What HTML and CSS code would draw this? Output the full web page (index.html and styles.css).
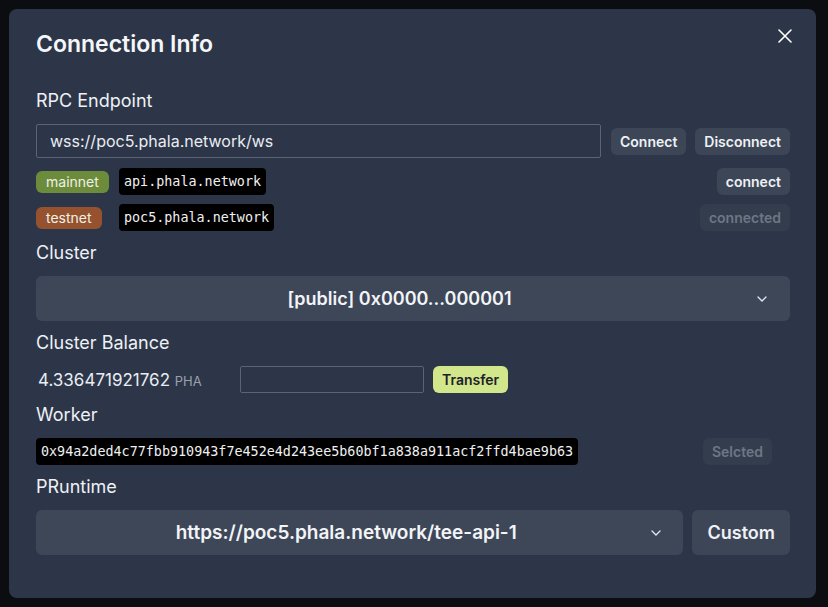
FILE: index.html
```html
<!DOCTYPE html>
<html lang="en">
<head>
  <meta charset="UTF-8">
  <title>Connection Info</title>
  <link rel="stylesheet" href="styles.css">
</head>
<body>
  <div class="backdrop">
    <div class="modal">
      <button class="close-btn" aria-label="Close">
        <svg width="14" height="14" viewBox="0 0 14 14"><path d="M1 1L13 13M13 1L1 13" stroke="#fff" stroke-width="1.6" stroke-linecap="round"/></svg>
      </button>
      <h1 class="modal-title">Connection Info</h1>

      <div class="section">
        <label class="field-label">RPC Endpoint</label>
        <div class="row">
          <input class="text-input endpoint-input" type="text" value="wss://poc5.phala.network/ws">
          <button class="btn">Connect</button>
          <button class="btn">Disconnect</button>
        </div>
        <div class="preset-row">
          <span class="badge-cell"><span class="badge badge-main">mainnet</span></span>
          <code class="code">api.phala.network</code>
          <button class="btn push-right">connect</button>
        </div>
        <div class="preset-row">
          <span class="badge-cell"><span class="badge badge-test">testnet</span></span>
          <code class="code">poc5.phala.network</code>
          <button class="btn push-right" disabled>connected</button>
        </div>
      </div>

      <div class="section">
        <label class="field-label">Cluster</label>
        <div class="select">
          <span>[public] 0x0000...000001</span>
          <svg class="chevron" width="10" height="6" viewBox="0 0 10 6"><path d="M1 1L5 5L9 1" stroke="#e2e8f0" stroke-width="1.3" fill="none" stroke-linecap="round"/></svg>
        </div>
      </div>

      <div class="section">
        <label class="field-label">Cluster Balance</label>
        <div class="balance-row">
          <span class="balance">4.336471921762 <small>PHA</small></span>
          <input class="text-input amount-input" type="text">
          <button class="btn btn-lime">Transfer</button>
        </div>
      </div>

      <div class="section">
        <label class="field-label">Worker</label>
        <div class="worker-row">
          <code class="code code-worker">0x94a2ded4c77fbb910943f7e452e4d243ee5b60bf1a838a911acf2ffd4bae9b63</code>
          <button class="btn" disabled>Selcted</button>
        </div>
      </div>

      <div class="section">
        <label class="field-label">PRuntime</label>
        <div class="row">
          <div class="select select-runtime">
            <span>https://poc5.phala.network/tee-api-1</span>
            <svg class="chevron" width="10" height="6" viewBox="0 0 10 6"><path d="M1 1L5 5L9 1" stroke="#e2e8f0" stroke-width="1.3" fill="none" stroke-linecap="round"/></svg>
          </div>
          <button class="btn btn-large">Custom</button>
        </div>
      </div>
    </div>
  </div>
</body>
</html>
```

FILE: styles.css
```css
body {
  margin: 0;
  background-color: #0c0d10;
  font-family: Inter, "Noto Sans", sans-serif;
  color: #e9edf3;
}

.backdrop {
  width: 828px;
  height: 607px;
  padding: 9px 0 0 9px;
  box-sizing: border-box;
}

.modal {
  position: relative;
  width: 807px;
  height: 589px;
  box-sizing: border-box;
  padding: 19px 26px 0 27px;
  background-color: #2d3648;
  border-radius: 8px;
}

.close-btn {
  position: absolute;
  top: 15px;
  right: 19px;
  width: 24px;
  height: 24px;
  padding: 0;
  border: none;
  background: none;
  display: flex;
  align-items: center;
  justify-content: center;
}

.modal-title {
  margin: 0 0 29px;
  font-size: 23px;
  font-weight: 600;
  line-height: 32px;
  color: #f4f6f9;
}

.section {
  margin-bottom: 10px;
}

.field-label {
  display: block;
  font-size: 18px;
  line-height: 24px;
  margin-bottom: 11px;
  color: #eef1f5;
}

.row {
  display: flex;
  align-items: center;
  gap: 9px;
}

.text-input {
  box-sizing: border-box;
  background: transparent;
  border: 1px solid #5b6475;
  border-radius: 2px;
  color: #e9edf3;
  font-family: inherit;
  outline: none;
}

.endpoint-input {
  width: 565px;
  height: 34px;
  padding: 0 13px;
  font-size: 16px;
  margin-right: 1px;
}

.btn {
  height: 27px;
  padding: 0 9px;
  border: none;
  border-radius: 6px;
  background-color: #3d4657;
  color: #eef1f5;
  font-family: inherit;
  font-size: 14px;
  font-weight: 600;
}

.btn:disabled {
  color: #6e7685;
  background-color: #343d4e;
}

.push-right {
  margin-left: auto;
}

.preset-row {
  display: flex;
  align-items: center;
  margin-top: 10px;
}

.preset-row + .preset-row {
  margin-top: 9px;
}

.badge-cell {
  width: 83px;
}

.badge {
  display: inline-block;
  height: 22px;
  line-height: 22px;
  padding: 0 10px;
  border-radius: 6px;
  font-size: 14px;
  color: #eef1e6;
}

.badge-main {
  background-color: #6c8b3b;
}

.badge-test {
  background-color: #96522f;
}

.code {
  display: inline-block;
  height: 27px;
  line-height: 27px;
  padding: 0 5px;
  background-color: #000;
  border-radius: 4px;
  font-family: "DejaVu Sans Mono", monospace;
  font-size: 13.4px;
  color: #f0f0f0;
}

.select {
  position: relative;
  height: 45px;
  display: flex;
  align-items: center;
  justify-content: center;
  padding: 0 40px 0 13px;
  background-color: #3e4758;
  border-radius: 6px;
  font-size: 18px;
  font-weight: 600;
  color: #f2f4f7;
}

.chevron {
  position: absolute;
  right: 23px;
  top: 20px;
}

.balance-row {
  display: flex;
  align-items: center;
}

.balance {
  width: 202px;
  padding-left: 2px;
  font-size: 17px;
}

.balance small {
  font-size: 13px;
  color: #9aa1ad;
}

.amount-input {
  width: 184px;
  height: 27px;
  margin-right: 9px;
}

.btn-lime {
  background-color: #d2e68b;
  color: #1d2129;
}

.worker-row {
  display: flex;
  align-items: center;
}

.code-worker {
  margin-right: auto;
}

.worker-row .btn {
  margin-right: 18px;
}

.select-runtime {
  flex: 1;
  font-size: 19px;
}

.select-runtime .chevron {
  right: 22px;
}

.btn-large {
  height: 45px;
  padding: 0 15px;
  font-size: 18px;
}
```
